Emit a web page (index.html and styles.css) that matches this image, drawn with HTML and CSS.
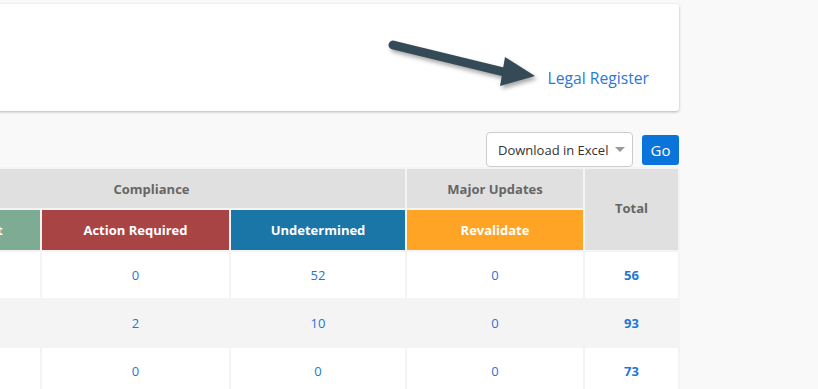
FILE: index.html
```html
<!DOCTYPE html>
<html lang="en">

<head>
    <meta charset="UTF-8">
    <meta name="viewport" content="width=device-width, initial-scale=1.0">
    <title>Legal Register</title>
    <link rel="stylesheet" href="styles.css">
</head>

<body>
    <div class="page">
        <div class="card">
            <svg class="arrow" width="165" height="65" viewBox="0 0 165 65">
                <line x1="13" y1="15" x2="128" y2="43" stroke="#344a56" stroke-width="9" stroke-linecap="round" />
                <polygon points="125,27 120,56 155,46" fill="#344a56" />
            </svg>
            <a class="link" href="#">Legal Register</a>
        </div>

        <div class="toolbar">
            <div class="select">
                <span>Download in Excel</span>
                <i class="caret"></i>
            </div>
            <button class="go">Go</button>
        </div>

        <table class="grid">
            <colgroup>
                <col style="width:142px">
                <col style="width:187px">
                <col style="width:174px">
                <col style="width:176px">
                <col style="width:93px">
            </colgroup>
            <thead>
                <tr class="group">
                    <th colspan="3">Compliance</th>
                    <th>Major Updates</th>
                    <th rowspan="2" class="total">Total</th>
                </tr>
                <tr class="status">
                    <th class="green">Compliant</th>
                    <th class="red">Action Required</th>
                    <th class="blue">Undetermined</th>
                    <th class="orange">Revalidate</th>
                </tr>
            </thead>
            <tbody>
                <tr>
                    <td></td>
                    <td><a href="#">0</a></td>
                    <td><a href="#">52</a></td>
                    <td><a href="#">0</a></td>
                    <td class="sum"><a href="#">56</a></td>
                </tr>
                <tr class="odd">
                    <td></td>
                    <td><a href="#">2</a></td>
                    <td><a href="#">10</a></td>
                    <td><a href="#">0</a></td>
                    <td class="sum"><a href="#">93</a></td>
                </tr>
                <tr>
                    <td></td>
                    <td><a href="#">0</a></td>
                    <td><a href="#">0</a></td>
                    <td><a href="#">0</a></td>
                    <td class="sum"><a href="#">73</a></td>
                </tr>
            </tbody>
        </table>
    </div>
</body>

</html>
```

FILE: styles.css
```css
* {
    margin: 0;
    padding: 0;
    box-sizing: border-box;
}

body {
    background: #f9f9f9;
    font-family: "Open Sans", "Noto Sans", sans-serif;
    overflow: hidden;
}

.page {
    width: 784px;
    margin-left: -104px;
    padding-top: 4px;
}

.card {
    position: relative;
    height: 107px;
    margin-right: 1px;
    background: #fff;
    border-radius: 0 3px 3px 0;
    box-shadow: 0 1px 3px rgba(0, 0, 0, 0.28);
    display: flex;
    justify-content: flex-end;
    padding: 63px 30px 0 0;
}

.arrow {
    position: absolute;
    left: 484px;
    top: 26px;
    filter: drop-shadow(2px 3px 2px rgba(0, 0, 0, 0.35));
}

.link {
    font-size: 15.7px;
    line-height: 22px;
    color: #2a78d6;
    text-decoration: none;
    height: 22px;
}

.toolbar {
    display: flex;
    justify-content: flex-end;
    align-items: center;
    gap: 9px;
    margin-top: 21px;
    padding-right: 1px;
}

.select {
    width: 147px;
    height: 35px;
    flex-shrink: 0;
    background: #fff;
    border: 1px solid #ccc;
    border-radius: 4px;
    display: flex;
    align-items: center;
    padding-left: 11px;
    font-size: 13px;
    color: #333;
    white-space: nowrap;
}

.caret {
    margin-left: 7px;
    width: 0;
    height: 0;
    border-left: 5px solid transparent;
    border-right: 5px solid transparent;
    border-top: 5px solid #999;
}

.go {
    width: 37px;
    height: 30px;
    flex-shrink: 0;
    background: #0a74da;
    color: #fff;
    border: none;
    border-radius: 3px;
    font-family: inherit;
    font-size: 15px;
}

.grid {
    table-layout: fixed;
    width: 784px;
    border-collapse: separate;
    border-spacing: 2px;
    background: #f4f4f4;
    font-size: 13px;
    text-align: center;
}

.grid th {
    font-weight: 700;
    color: #666;
    background: #e0e0e0;
}

.group th {
    height: 39px;
}

.grid th.total {
    padding-bottom: 3px;
}

.status th {
    height: 40px;
    color: #fff;
}

.grid th.green {
    background: #7eab93;
}

.grid th.red {
    background: #a84444;
}

.grid th.blue {
    background: #1b76a8;
}

.grid th.orange {
    background: #ffa424;
}

.grid td {
    height: 46px;
    background: #fff;
}

.grid tr.odd td {
    background: #f4f4f4;
}

.grid td a {
    color: #1f76d6;
    text-decoration: none;
}

.grid td.sum a {
    font-weight: 700;
}
```
